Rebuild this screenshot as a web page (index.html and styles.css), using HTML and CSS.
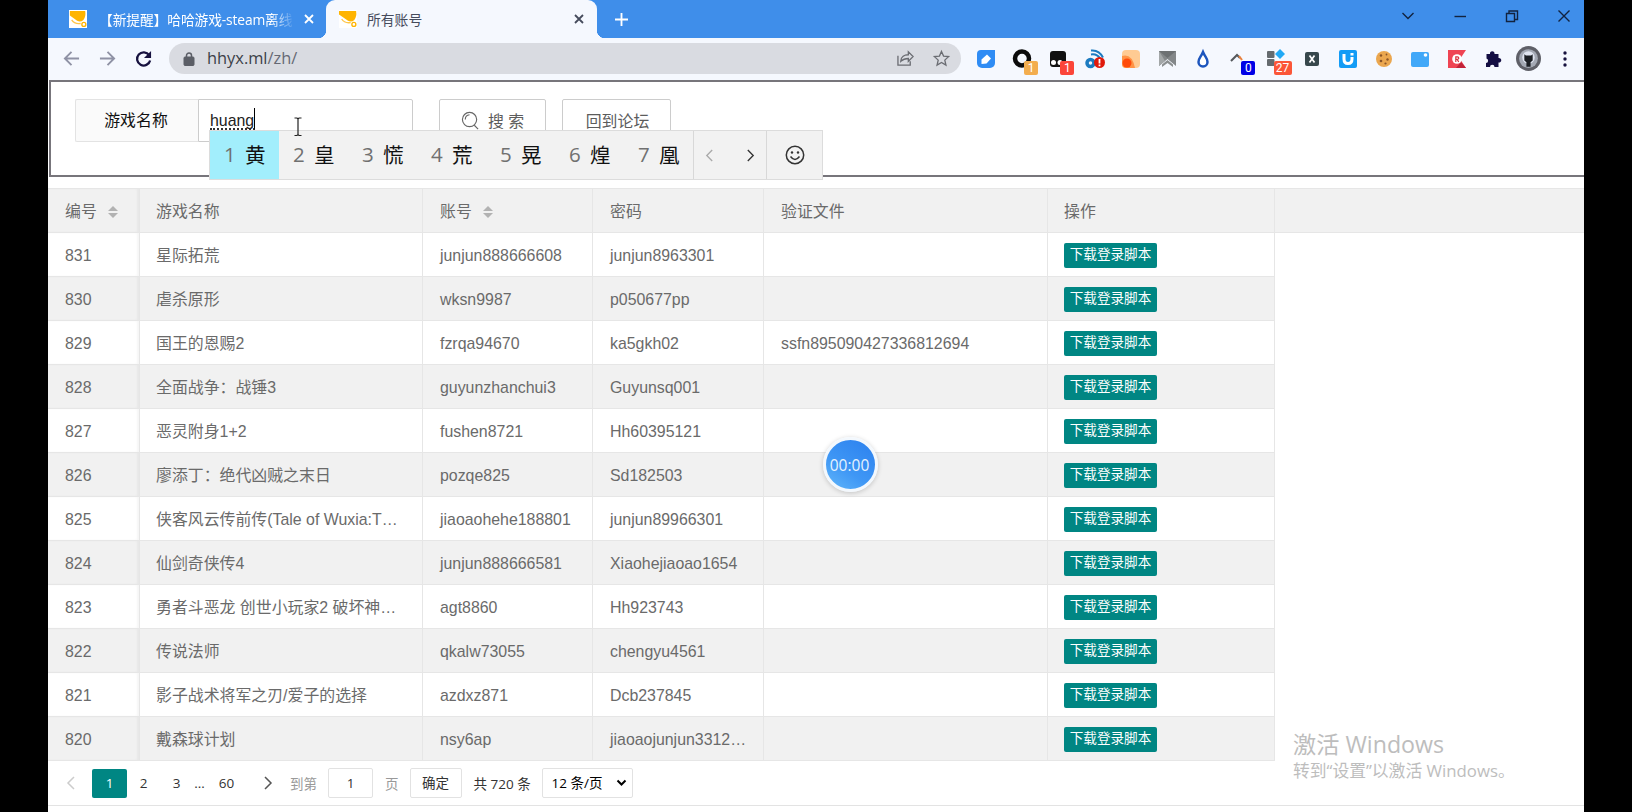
FILE: index.html
```html
<!DOCTYPE html>
<html lang="zh">
<head>
  <meta charset="UTF-8">
  <title>所有账号</title>
  <link rel="stylesheet" href="styles.css">
</head>
<body>
  <div class="screen">
    <!-- Tab strip -->
    <div class="tabs">
      <div class="tab">
        <svg class="favicon" viewBox="0 0 20 20"><rect width="20" height="20" fill="#fff"/><path d="M1 1h17q1 6-2 10-3 3-7 1L1 6z" fill="#ffb400"/><path d="M3 11q3 5 10 4" fill="none" stroke="#ffc64a" stroke-width="1.5"/><circle cx="16.500" cy="16" r="2.200" fill="#fff" stroke="#ffb400" stroke-width="1.500"/></svg>
        <span class="tab-title fade">【新提醒】哈哈游戏-steam离线</span>
        <svg class="tab-close" viewBox="0 0 10 10"><path d="M1 1l8 8M9 1L1 9"/></svg>
      </div>
      <div class="tab active">
        <svg class="favicon" viewBox="0 0 20 20"><rect width="20" height="20" fill="#fff"/><path d="M0 1h19q1 6-2 10-3 3-7 1L0 5z" fill="#ffb400"/><path d="M3 10q3 5 10 4" fill="none" stroke="#ffc64a" stroke-width="1.5"/><circle cx="16.500" cy="16" r="2.200" fill="#fff" stroke="#ffb400" stroke-width="1.500"/></svg>
        <span class="tab-title">所有账号</span>
        <svg class="tab-close" viewBox="0 0 10 10"><path d="M1 1l8 8M9 1L1 9"/></svg>
      </div>
      <svg class="new-tab" viewBox="0 0 14 14"><path d="M7 0v14M0 7h14"/></svg>
      <div class="win">
        <svg viewBox="0 0 14 14"><path d="M1.500 4L7 9.500 12.500 4"/></svg>
        <svg viewBox="0 0 14 14"><path d="M1.500 7.500h11.500"/></svg>
        <svg viewBox="0 0 14 14"><path d="M1.500 4.500h8v8h-8zM4 4V2h8.500v8.500h-2.500"/></svg>
        <svg viewBox="0 0 14 14"><path d="M1.500 1.500l11 11M12.500 1.500l-11 11"/></svg>
      </div>
    </div>

    <!-- Toolbar -->
    <div class="toolbar">
      <svg class="nav" viewBox="0 0 18 18"><path d="M17 9H2M9 2L2 9l7 7"/></svg>
      <svg class="nav" viewBox="0 0 18 18"><path d="M1 9h15M9 2l7 7-7 7"/></svg>
      <svg class="nav reload" viewBox="0 0 18 18"><path d="M15 5.500A7 7 0 1 0 16 11"/><path class="solid" d="M17 1v7.500h-7.500z"/></svg>
      <div class="omnibox">
        <svg class="lock" viewBox="0 0 10 14"><rect y="5" width="10" height="8.500" rx="1"/><path d="M2.500 5V3.500a2.500 2.500 0 0 1 5 0V5"/></svg>
        <span class="url">hhyx.ml<i>/zh/</i></span>
        <svg class="act" viewBox="0 0 18 18"><path d="M1 6v10h13v-4M4 12c0-5 4-7 8-7V2l5 5-5 5V9c-4 0-6 1-8 3z"/></svg>
        <svg class="act" viewBox="0 0 18 18"><path d="M9 1.500l2.200 5 5.300.5-4 3.700 1.200 5.300L9 13.200 4.300 16l1.200-5.300-4-3.700 5.300-.5z"/></svg>
      </div>
      <div class="exts">
        <div class="ext"><svg viewBox="0 0 20 20"><path d="M5 1h14v13a5 5 0 0 1-5 5H6a5 5 0 0 1-5-5V5a4 4 0 0 1 4-4z" fill="#2f8cf4"/><path d="M5.500 15v-4.500L11 5.500l4 4-4.500 5z" fill="#fff"/></svg></div>
        <div class="ext"><svg viewBox="0 0 20 20"><circle cx="10" cy="9.500" r="7" fill="none" stroke="#0b0b0b" stroke-width="4.500"/></svg><b class="badge orange">1</b></div>
        <div class="ext"><svg viewBox="0 0 20 20"><rect x="2" y="2" width="16" height="16" rx="3" fill="#111"/><circle cx="5.500" cy="13.500" r="2.500" fill="#fff"/><circle cx="12" cy="13.500" r="2.500" fill="#fff"/></svg><b class="badge red">1</b></div>
        <div class="ext"><svg viewBox="0 0 20 20"><g fill="none" stroke="#1c7bc0" stroke-width="2"><path d="M6 1.500q8-1 12 7M6 5.500q6-1 9 4"/><circle cx="5.500" cy="14" r="3.500" stroke-width="3.500"/></g><circle cx="14.500" cy="13.500" r="5.500" fill="#e0190b"/><path d="M14.500 10v4.500M14.500 15.500v1.800" stroke="#fff" stroke-width="1.800"/></svg></div>
        <div class="ext"><svg viewBox="0 0 20 20"><rect x="1" y="1" width="18" height="18" rx="4" fill="#ffcb93"/><path d="M1 7q10-3 13 12H5a4 4 0 0 1-4-4z" fill="#ff9345"/><circle cx="6" cy="14" r="4.500" fill="#ff4b0a"/></svg></div>
        <div class="ext"><svg viewBox="0 0 20 20"><path d="M2 2h17v15l-8.500-7L2 17z" fill="#84888a"/><path d="M2 2v15l6-5z" fill="#a3a7a8"/><path d="M2 2h17l-8.500 7z" fill="#6d7173"/><path d="M5 18v-2.500l5.500-4.500 5.500 4.500V18l-5.500-4z" fill="#8b8f90"/></svg></div>
        <div class="ext"><svg viewBox="0 0 20 20"><path d="M10 3C8 8 5.500 9 5.500 13a4.500 4.500 0 0 0 9 0C14.500 9 12 8 10 3z" fill="#fff" stroke="#1d55bd" stroke-width="2.500"/></svg></div>
        <div class="ext"><svg viewBox="0 0 20 20"><path d="M2 12l6-6 3 3" fill="none" stroke="#54585c" stroke-width="2"/><path d="M10 7l3 4" stroke="#e9813e" stroke-width="2"/></svg><b class="badge blue">0</b></div>
        <div class="ext"><svg viewBox="0 0 20 20"><rect x="1" y="2" width="7.500" height="7" rx="1" fill="#646a6e"/><rect x="1" y="10" width="7.500" height="7" rx="1" fill="#646a6e"/><path d="M14 0l5 5-5 5-5-5z" fill="#21a9f5"/></svg><b class="badge wide">27</b></div>
        <div class="ext"><svg viewBox="0 0 20 20"><rect x="3" y="3" width="14" height="14" rx="2" fill="#37474c"/><path d="M7.500 6.500l5 7M12.500 6.500l-5 7" stroke="#fff" stroke-width="1.700"/></svg></div>
        <div class="ext"><svg viewBox="0 0 20 20"><rect x="1" y="1" width="18" height="18" rx="2" fill="#139cf6"/><path d="M6 5v5q0 4.500 4 4.500t4-4.500V8" fill="none" stroke="#fff" stroke-width="3"/><rect x="12.500" y="4" width="3" height="2.500" fill="#fff"/></svg></div>
        <div class="ext"><svg viewBox="0 0 20 20"><circle cx="10" cy="10" r="8" fill="#eba74f"/><g fill="#8a5428"><circle cx="7" cy="6.500" r="1.200"/><circle cx="12.500" cy="5.500" r=".9"/><circle cx="13.500" cy="10.500" r="1.200"/><circle cx="7" cy="12" r="1.300"/><circle cx="11.500" cy="14.500" r="1.100"/></g></svg></div>
        <div class="ext"><svg viewBox="0 0 20 20"><rect x="1" y="3" width="18" height="15" rx="2" fill="#41a8f8"/><circle cx="15.500" cy="6" r="1.800" fill="#fff"/></svg></div>
        <div class="ext"><svg viewBox="0 0 20 20"><path d="M1 1h18l-6 9 6 9H1z" fill="#ef4453"/><path d="M9 19h10l-5-6z" fill="#c22238"/><circle cx="10" cy="10" r="4.800" fill="#fff"/><path d="M8.800 13V7.800h1.700a1.200 1.200 0 0 1 0 2.500H9M10.300 10.500l1.400 2.500" fill="none" stroke="#d8323f" stroke-width="1.200"/></svg></div>
        <div class="ext"><svg viewBox="0 0 20 20"><path d="M3.500 5H7a2.300 2.300 0 1 1 4.500 0H15.500v4a2.300 2.300 0 1 1 0 4.500V18h-4a2.200 2.200 0 0 0-4.500 0H3v-4a2.300 2.300 0 0 0 .5-4.500z" fill="#140e43"/></svg></div>
        <div class="ext"><svg class="avatar" viewBox="0 0 24 24"><circle cx="12" cy="12" r="12" fill="#5f6068"/><circle cx="12" cy="12" r="9" fill="#a4a9b4"/><circle cx="12" cy="11" r="6" fill="#dfe4f0"/><path d="M8 8l1.500 1h5L16 8v6l-2 1.500V20h-4v-4.500L8 14z" fill="#1c1f24"/></svg></div>
        <div class="ext menu"><svg viewBox="0 0 20 20"><circle cx="10" cy="4" r="1.700"/><circle cx="10" cy="10" r="1.700"/><circle cx="10" cy="16" r="1.700"/></svg></div>
      </div>
    </div>

    <!-- Search form -->
    <div class="search">
      <label class="label">游戏名称</label>
      <div class="input"><span class="typed">huang</span></div>
      <button class="btn find"><svg viewBox="0 0 20 20"><circle cx="9" cy="9" r="7.500"/><path d="M9 4a5 5 0 0 0-4.500 5M14 15l4 4"/></svg>搜 索</button>
      <button class="btn back">回到论坛</button>

      <!-- Input method candidates -->
      <div class="ime">
        <div class="cand on"><i>1</i>黄</div>
        <div class="cand"><i>2</i>皇</div>
        <div class="cand"><i>3</i>慌</div>
        <div class="cand"><i>4</i>荒</div>
        <div class="cand"><i>5</i>晃</div>
        <div class="cand"><i>6</i>煌</div>
        <div class="cand"><i>7</i>凰</div>
        <div class="turn">
          <svg class="off" viewBox="0 0 10 14"><path d="M8 1L2 7l6 6"/></svg>
          <svg viewBox="0 0 10 14"><path d="M2 1l6 6-6 6"/></svg>
        </div>
        <div class="smile"><svg viewBox="0 0 20 20"><circle cx="10" cy="10" r="8.700"/><path d="M5.500 11.500q4.500 6 9 0"/><circle class="eye" cx="7" cy="7.500" r="1.200"/><circle class="eye" cx="13" cy="7.500" r="1.200"/></svg></div>
      </div>
      <svg class="cursor" viewBox="0 0 8 20"><path d="M.5 1h2.500l1 1 1-1h2.500M4 2v15M.5 18.500h2.500l1-1 1 1h2.500"/></svg>
    </div>

    <!-- Accounts -->
    <div class="table-box">
      <table>
        <colgroup><col class="c1"><col class="c2"><col class="c3"><col class="c4"><col class="c5"><col class="c6"><col></colgroup>
        <thead>
          <tr>
            <th>编号<span class="sort"></span></th>
            <th>游戏名称</th>
            <th>账号<span class="sort"></span></th>
            <th>密码</th>
            <th>验证文件</th>
            <th>操作</th>
            <th class="rest"></th>
          </tr>
        </thead>
        <tbody id="rows"></tbody>
      </table>
    </div>

    <!-- Pagination -->
    <div class="pager">
      <svg class="arrow off" viewBox="0 0 10 14"><path d="M8 1L2 7l6 6"/></svg>
      <span class="page on">1</span>
      <span class="page">2</span>
      <span class="page">3</span>
      <span class="dots">…</span>
      <span class="page last">60</span>
      <svg class="arrow" viewBox="0 0 10 14"><path d="M2 1l6 6-6 6"/></svg>
      <span class="skip">到第</span>
      <span class="box num">1</span>
      <span class="skip">页</span>
      <span class="box ok">确定</span>
      <span class="count">共 720 条</span>
      <span class="box limit">12 条/页<svg viewBox="0 0 10 8"><path d="M1 1.500l4 4 4-4"/></svg></span>
    </div>

    <div class="timer">00:00</div>
    <div class="watermark">
      <p class="big">激活 Windows</p>
      <p>转到“设置”以激活 Windows。</p>
    </div>
  </div>

  <script>
    const accounts = [
      [831, "星际拓荒", "junjun888666608", "junjun8963301", ""],
      [830, "虐杀原形", "wksn9987", "p050677pp", ""],
      [829, "国王的恩赐2", "fzrqa94670", "ka5gkh02", "ssfn895090427336812694"],
      [828, "全面战争：战锤3", "guyunzhanchui3", "Guyunsq001", ""],
      [827, "恶灵附身1+2", "fushen8721", "Hh60395121", ""],
      [826, "廖添丁：绝代凶贼之末日", "pozqe825", "Sd182503", ""],
      [825, "侠客风云传前传(Tale of Wuxia:T…", "jiaoaohehe188801", "junjun89966301", ""],
      [824, "仙剑奇侠传4", "junjun888666581", "Xiaohejiaoao1654", ""],
      [823, "勇者斗恶龙 创世小玩家2 破坏神…", "agt8860", "Hh923743", ""],
      [822, "传说法师", "qkalw73055", "chengyu4561", ""],
      [821, "影子战术将军之刃/爱子的选择", "azdxz871", "Dcb237845", ""],
      [820, "戴森球计划", "nsy6ap", "jiaoaojunjun3312…", ""]
    ];

    // Fill the table body
    const rows = document.getElementById("rows");
    accounts.forEach(a => {
      const tr = document.createElement("tr");
      tr.innerHTML = a.map(v => `<td>${v}</td>`).join("") +
        `<td><a class="down">下载登录脚本</a></td><td class="rest"></td>`;
      rows.appendChild(tr);
    });
  </script>
</body>
</html>
```

FILE: styles.css
```css
* {
  box-sizing: border-box;
}

body {
  margin: 0;
  background: #000;
  font-family: "Liberation Sans", "Noto Sans CJK SC", sans-serif;
  font-size: 15.9px;
  color: #6a6a6a;
}

i {
  font-style: normal;
}

svg {
  flex: none;
  overflow: visible;
}

.screen {
  position: relative;
  width: 1536px;
  height: 812px;
  margin: 0 auto;
  background: #fff;
  overflow: hidden;
}

/* tabs */
.tabs {
  display: flex;
  align-items: center;
  height: 38px;
  background: #3f8eea;
}

.tab {
  display: flex;
  align-items: center;
  width: 278px;
  height: 38px;
  padding: 0 12px 0 21px;
  font-family: "Open Sans", "Noto Sans CJK SC", sans-serif;
  font-size: 13.8px;
  color: #fff;
}

.tab.active {
  position: relative;
  width: 271px;
  padding: 0 13px;
  background: #f5f8fe;
  border-radius: 9px 9px 0 0;
  color: #454b5c;
}

.tab.active::before,
.tab.active::after {
  content: "";
  position: absolute;
  bottom: 0;
  left: -8px;
  width: 8px;
  height: 8px;
  background: radial-gradient(circle at 0 0, transparent 8px, #f5f8fe 8.5px);
}

.tab.active::after {
  left: auto;
  right: -8px;
  background: radial-gradient(circle at 100% 0, transparent 8px, #f5f8fe 8.5px);
}

.favicon {
  width: 18px;
  height: 18px;
}

.tab-title {
  flex: 1;
  margin-left: 10px;
  overflow: hidden;
  white-space: nowrap;
}

.tab-title.fade {
  margin: 0 7px 0 12px;
  font-size: 13.8px;
  letter-spacing: -0.15px;
  -webkit-mask-image: linear-gradient(to right, #000 172px, transparent 196px);
  mask-image: linear-gradient(to right, #000 172px, transparent 196px);
}

.tab-close {
  width: 10px;
  height: 10px;
  fill: none;
  stroke: currentColor;
  stroke-width: 1.8;
}

.new-tab {
  width: 13px;
  height: 13px;
  margin-left: 18px;
  fill: none;
  stroke: #fff;
  stroke-width: 2;
}

.win {
  display: flex;
  gap: 38px;
  margin: -6px 13px 0 auto;
}

.win svg {
  width: 14px;
  height: 14px;
  fill: none;
  stroke: #12233f;
  stroke-width: 1.4;
}

/* toolbar */
.toolbar {
  display: flex;
  align-items: center;
  height: 42px;
  padding: 0 0 1px 15px;
  background: #f5f8fe;
}

.nav {
  width: 17px;
  height: 17px;
  margin-right: 19px;
  fill: none;
  stroke: #8f92a5;
  stroke-width: 2;
}

.nav.reload {
  margin-right: 17px;
  stroke: #17123f;
  stroke-width: 2.4;
}

.nav .solid {
  fill: #17123f;
  stroke: none;
}

.omnibox {
  display: flex;
  align-items: center;
  width: 792px;
  height: 31px;
  padding: 0 11px 0 15px;
  background: #d9dbe1;
  border-radius: 16px;
}

.lock {
  width: 10px;
  height: 14px;
  fill: #5b5e66;
  stroke: #5b5e66;
}

.lock path {
  fill: none;
  stroke-width: 1.5;
}

.url {
  flex: 1;
  margin: -2px 0 0 13px;
  font-family: "Open Sans", sans-serif;
  font-size: 16.4px;
  color: #3c3f48;
}

.url i {
  color: #666974;
}

.act {
  width: 17px;
  height: 17px;
  margin-left: 19px;
  fill: none;
  stroke: #6b6d73;
  stroke-width: 1.4;
}

.exts {
  display: flex;
  margin-left: 7px;
}

.ext {
  position: relative;
  display: flex;
  justify-content: center;
  align-items: center;
  width: 36.2px;
  height: 30px;
}

.ext svg {
  width: 20px;
  height: 20px;
}

.ext .avatar {
  width: 25px;
  height: 25px;
}

.ext.menu svg {
  fill: #17123f;
}

.badge {
  position: absolute;
  top: 17px;
  left: 20px;
  width: 14px;
  height: 14px;
  border-radius: 2px;
  font: 12px/14px Roboto, sans-serif;
  text-align: center;
  color: #fff;
}

.orange {
  background: #f3ad4e;
}

.red {
  background: #fb4539;
}

.blue {
  background: #0000e6;
}

.wide {
  left: 16px;
  width: 18px;
  background: #fb5638;
}

/* search */
.search {
  position: relative;
  display: flex;
  align-items: flex-start;
  height: 97px;
  margin-left: 1px;
  padding: 17px 0 0 24px;
  border: 2px solid #77757b;
  border-right: 0;
}

.label {
  width: 123px;
  height: 43px;
  padding-right: 2px;
  border: 1px solid #e3e3e3;
  border-right: 0;
  border-radius: 2px 0 0 2px;
  background: #fafafa;
  line-height: 42px;
  text-align: center;
  color: #111;
}

.input {
  width: 215px;
  height: 43px;
  padding: 8px 0 0 11px;
  border: 1px solid #ccc;
  border-radius: 0 2px 2px 0;
  color: #222;
}

.typed {
  display: inline-block;
  height: 22px;
  line-height: 26px;
  border-right: 1px solid #000;
  border-bottom: 2px dotted #333;
}

.btn {
  display: flex;
  align-items: center;
  justify-content: center;
  height: 43px;
  padding: 0;
  border: 1px solid #ccc;
  border-radius: 2px;
  background: #fff;
  font: inherit;
  color: #5c5c5c;
}

.find {
  width: 107px;
  margin-left: 26px;
}

.find svg {
  width: 19px;
  height: 19px;
  margin-right: 8px;
  fill: none;
  stroke: #666;
  stroke-width: 1.2;
}

.back {
  width: 109px;
  margin-left: 16px;
  padding-left: 2px;
}

.ime {
  position: absolute;
  top: 48px;
  left: 158px;
  display: flex;
  width: 614px;
  height: 50px;
  border: 1px solid #dcdcdc;
  background: #f2f2f2;
  font-size: 20.6px;
  color: #111;
}

.cand {
  display: flex;
  align-items: center;
  width: 69px;
  padding: 0 0 2px 14px;
}

.cand i {
  width: 21px;
  font-family: "Open Sans", sans-serif;
  font-size: 20.5px;
  color: #707070;
}

.cand.on {
  background: #a2eefc;
}

.turn,
.smile {
  display: flex;
  align-items: center;
  justify-content: space-between;
  width: 73px;
  padding: 0 11px;
  border-left: 1px solid #d8d8d8;
}

.smile {
  justify-content: center;
  width: 56px;
}

.ime svg {
  width: 9px;
  height: 13px;
  fill: none;
  stroke: #333;
  stroke-width: 1.5;
}

.ime svg.off {
  stroke: #aaa;
}

.ime .smile svg {
  width: 20px;
  height: 20px;
}

.ime .eye {
  fill: #333;
  stroke: none;
}

.cursor {
  position: absolute;
  top: 35px;
  left: 243px;
  width: 8px;
  height: 20px;
  fill: none;
  stroke: #222;
  stroke-width: 1.2;
}

/* table */
.table-box {
  margin-top: 11px;
}

table {
  width: 1536px;
  table-layout: fixed;
  border-collapse: separate;
  border-spacing: 0;
}

.c1 { width: 92px; }
.c2 { width: 283px; }
.c3 { width: 170px; }
.c4 { width: 171px; }
.c5 { width: 284px; }
.c6 { width: 227px; }

th,
td {
  height: 44px;
  padding: 2px 0 0 17px;
  border-right: 1px solid #e6e6e6;
  border-bottom: 1px solid #e6e6e6;
  font-weight: normal;
  line-height: 24px;
  text-align: left;
  white-space: nowrap;
}

th:nth-child(2),
td:nth-child(2),
th:nth-child(6),
td:nth-child(6) {
  padding-left: 16px;
}

th {
  height: 45px;
  border-top: 1px solid #e6e6e6;
  background: #f1f1f1;
}

th:first-child,
td:first-child {
  box-shadow: inset -2px 0 2px rgba(0, 0, 0, 0.04);
}

tbody tr:nth-child(even) td {
  background: #f1f1f1;
}

th.rest {
  border-right: 0;
}

tbody tr td.rest {
  border: 0;
  background: #fff;
}

.sort {
  display: inline-flex;
  flex-direction: column;
  gap: 2px;
  margin-left: 11px;
  vertical-align: middle;
}

.sort::before,
.sort::after {
  content: "";
  border: 5.5px solid transparent;
  border-top: 0;
  border-bottom-color: #b2b2b2;
}

.sort::after {
  border-top: 5.5px solid #b2b2b2;
  border-bottom: 0;
}

.down {
  display: block;
  width: 93px;
  height: 25px;
  border-radius: 2px;
  background: #008683;
  font-size: 13.6px;
  line-height: 24px;
  text-align: center;
  color: #fff;
}

/* pagination */
.pager {
  display: flex;
  align-items: center;
  height: 45px;
  padding: 0 0 0 18px;
  border-bottom: 1px solid #e3e3e3;
  font-family: "Open Sans", "Noto Sans CJK SC", sans-serif;
  font-size: 13.5px;
  color: #333;
  white-space: nowrap;
}

.arrow {
  width: 10px;
  height: 14px;
  fill: none;
  stroke: #555;
  stroke-width: 1.5;
}

.arrow.off {
  stroke: #ccc;
}

.page {
  width: 33px;
  text-align: center;
}

.page.on {
  width: 35px;
  height: 29px;
  margin-left: 16px;
  border-radius: 2px;
  background: #008683;
  line-height: 29px;
  color: #fff;
}

.dots {
  width: 13px;
  text-align: center;
}

.page.last {
  width: 41px;
  margin-right: 16px;
}

.skip {
  margin-left: 17px;
  color: #999;
}

.skip + .box {
  margin-left: 11px;
}

.box {
  height: 30px;
  border: 1px solid #e2e2e2;
  border-radius: 2px;
  line-height: 28px;
  text-align: center;
}

.num {
  width: 45px;
}

.num + .skip {
  margin-left: 12px;
}

.ok {
  width: 52px;
}

.count {
  width: 57px;
  margin: 0 11px 0 12px;
}

.limit {
  display: flex;
  align-items: center;
  justify-content: space-between;
  width: 91px;
  padding: 0 5px 0 9px;
  color: #000;
}

.limit svg {
  width: 11px;
  height: 8px;
  fill: none;
  stroke: #000;
  stroke-width: 2;
}

/* recorder bubble and system watermark */
.timer {
  position: absolute;
  top: 437px;
  left: 775px;
  width: 55px;
  height: 55px;
  border: 3px solid #f3f8fd;
  border-radius: 50%;
  background: linear-gradient(215deg, #2b80ee, #3f97f5 60%, #62b7fa);
  box-shadow: 0 1px 5px rgba(0, 0, 0, 0.2);
  font: 15.5px/51px "Open Sans", sans-serif;
  text-align: center;
  text-indent: -2px;
  color: #e6f3ff;
}

.watermark {
  position: absolute;
  top: 728px;
  left: 1245px;
  font-family: "Open Sans", "Noto Sans CJK SC", sans-serif;
  font-size: 16.8px;
  color: #bdbdbd;
  white-space: nowrap;
}

.watermark p {
  margin: 0;
  line-height: 22px;
}

.watermark .big {
  font-size: 23.2px;
  line-height: 32px;
}
```
